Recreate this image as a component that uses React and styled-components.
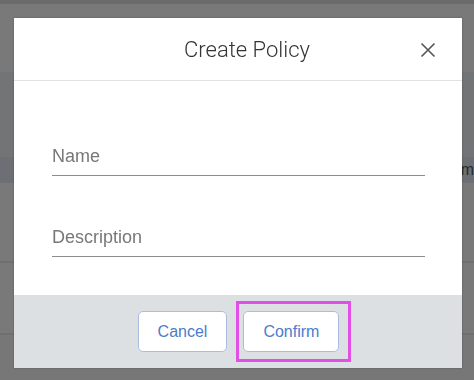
import styled, { createGlobalStyle } from "styled-components"

const Global = createGlobalStyle`
    html, body {
        margin: 0;
        padding: 0;
        width: 474px;
        height: 380px;
        overflow: hidden;
        background: #797979;
    }
`

const Pagina = styled.div`
    display: flex;
    flex-direction: column;
    width: 474px;
    height: 380px;
    background: #797979;
`

const Faixa = styled.div`
    height: ${(p) => p.$altura}px;
    background: ${(p) => p.$cor};
    border-bottom: ${(p) => (p.$linha ? "2px solid #6f6f6f" : "none")};
    display: flex;
    justify-content: flex-end;
    align-items: center;
    font-family: "Liberation Sans", Arial, sans-serif;
    font-size: 16px;
    color: #2a2a2a;
    overflow: hidden;
`

const Fundo = styled.div`
    position: fixed;
    inset: 0;
`

const Dialog = styled.div`
    position: absolute;
    top: 18px;
    left: 14px;
    width: 448px;
    height: 350px;
    display: flex;
    flex-direction: column;
    background: #fff;
    box-shadow: 0 0 2px rgba(0, 0, 0, 0.25);
`

const Cabecalho = styled.div`
    position: relative;
    height: 62px;
    flex-shrink: 0;
    display: flex;
    justify-content: center;
    align-items: center;
    border-bottom: 1px solid #e2e2e2;
`

const Titulo = styled.h2`
    margin: 0;
    font-family: Roboto, "Liberation Sans", sans-serif;
    font-weight: 300;
    font-size: 22px;
    color: #333;
    padding-left: 18px;
`

const BotaoFechar = styled.button`
    position: absolute;
    right: 26px;
    top: 24px;
    width: 16px;
    height: 16px;
    padding: 0;
    border: none;
    background: transparent;
    display: flex;
    cursor: pointer;
`

const Corpo = styled.div`
    flex: 1;
    display: flex;
    flex-direction: column;
    gap: 51px;
    padding: 65px 37px 0 38px;
`

const Campo = styled.label`
    display: block;
    padding-bottom: 8px;
    border-bottom: 1.5px solid #8d8d8d;
    font-family: "Liberation Sans", Arial, sans-serif;
    font-size: 18px;
    color: #787878;
    line-height: 21px;
`

const Rodape = styled.div`
    height: 73px;
    flex-shrink: 0;
    display: flex;
    justify-content: center;
    align-items: center;
    gap: 16px;
    background: #dde0e3;
    padding-left: 1px;
`

const Botao = styled.button`
    position: relative;
    height: 41px;
    padding: 0 19px;
    background: #fff;
    border: 1px solid #aabde0;
    border-radius: 5px;
    font-family: "Liberation Sans", Arial, sans-serif;
    font-size: 16px;
    color: #4b7ccc;
    cursor: pointer;

    ${(p) =>
        p.$destaque &&
        `
        &::after {
            content: "";
            position: absolute;
            top: -11px;
            left: -8px;
            right: -13px;
            bottom: -11px;
            border: 3px solid #e14fe6;
        }
    `}
`

const App = () => {
    return (
        <>
            <Global />
            <Pagina>
                <Faixa $altura={4} $cor="#6b6b6b" />
                <Faixa $altura={68} $cor="#797979" />
                <Faixa $altura={85} $cor="#737475" />
                <Faixa $altura={26} $cor="#6c7074">am</Faixa>
                <Faixa $altura={78} $cor="#797979" $linha />
                <Faixa $altura={70} $cor="#797979" $linha />
                <Faixa $altura={45} $cor="#777777" />
            </Pagina>
            <Fundo>
                <Dialog>
                    <Cabecalho>
                        <Titulo>Create Policy</Titulo>
                        <BotaoFechar aria-label="Close">
                            <svg width="16" height="16" viewBox="0 0 16 16">
                                <path d="M1.5 1.5 L14.5 14.5 M14.5 1.5 L1.5 14.5" stroke="#555" strokeWidth="1.6" />
                            </svg>
                        </BotaoFechar>
                    </Cabecalho>
                    <Corpo>
                        <Campo>Name</Campo>
                        <Campo>Description</Campo>
                    </Corpo>
                    <Rodape>
                        <Botao>Cancel</Botao>
                        <Botao $destaque>Confirm</Botao>
                    </Rodape>
                </Dialog>
            </Fundo>
        </>
    )
}

export default App
